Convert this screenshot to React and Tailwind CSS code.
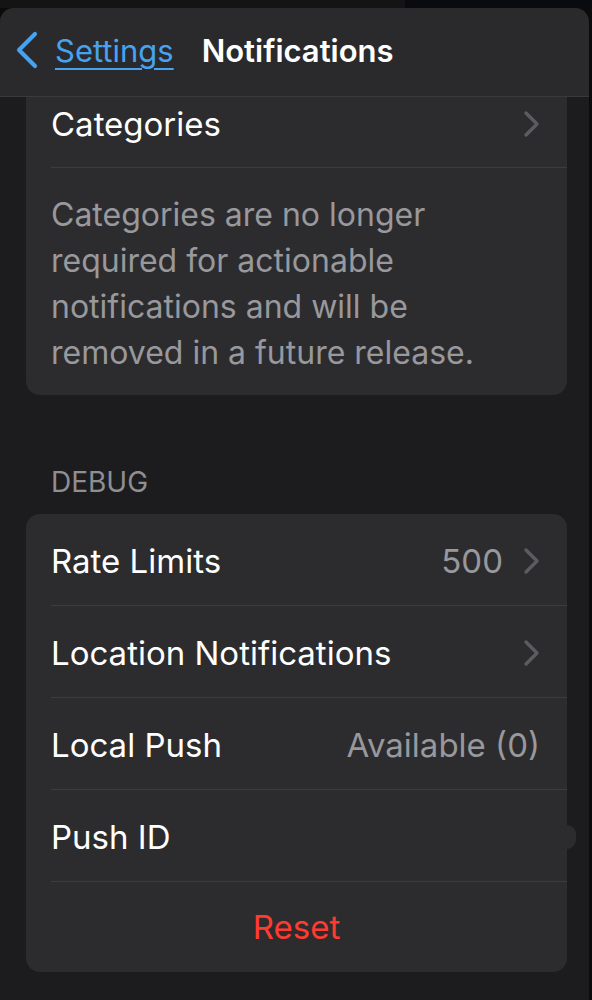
function Chevron() {
  return (
    <svg width="17" height="28" viewBox="0 0 17 28" fill="none" className="shrink-0">
      <path d="M3 3l11 11L3 25" stroke="#5c5c60" strokeWidth="3.4" strokeLinecap="round" strokeLinejoin="round" />
    </svg>
  )
}

function Row({ label, value, chevron, last }) {
  return (
    <div className="pl-[25px]">
      <div className={`h-[92px] flex items-center pt-[3px] pr-[27px] ${last ? '' : 'border-b border-[#3c3c3f]'}`}>
        <span className="text-white">{label}</span>
        <div className="ml-auto flex items-center gap-[20px]">
          {value && <span className="text-[#98989d]">{value}</span>}
          {chevron && <Chevron />}
        </div>
      </div>
    </div>
  )
}

export default function App() {
  return (
    <div
      className="w-[592px] h-[1000px] bg-[#0b0b0c] overflow-hidden flex flex-col text-[33px] leading-none"
      style={{ fontFamily: 'Inter, "Noto Sans", sans-serif' }}
    >
      {/* Status strip */}
      <div className="h-[8px] flex shrink-0">
        <div className="w-[405px] bg-[#141414]" />
        <div className="flex-1 bg-[#090b0e]" />
      </div>

      <div className="w-[589px] flex-1 bg-[#1c1c1e] rounded-t-[14px] overflow-hidden flex flex-col">
        {/* Nav bar */}
        <div className="h-[89px] shrink-0 bg-[#2a2a2c] border-b border-[#3a3a3c] flex items-center pl-[15px] pb-[4px]">
          <svg width="24" height="38" viewBox="0 0 24 38" fill="none">
            <path d="M20 3L4 19l16 16" stroke="#47a2ef" strokeWidth="4.2" strokeLinecap="round" strokeLinejoin="round" />
          </svg>
          <span className="ml-[16px] text-[31px] text-[#47a2ef] underline underline-offset-[6px] decoration-[2px]">Settings</span>
          <span className="ml-[28px] text-[31px] font-semibold text-white">Notifications</span>
        </div>

        <div className="pl-[26px] pr-[22px] flex flex-col">
          {/* Categories card (scrolled under the bar) */}
          <div className="bg-[#2c2c2e] rounded-b-[14px]">
            <div className="pl-[25px]">
              <div className="h-[71px] flex items-center pr-[27px] pb-[16px] border-b border-[#3c3c3f]">
                <span className="text-white">Categories</span>
                <div className="ml-auto"><Chevron /></div>
              </div>
            </div>
            <p className="px-[25px] pt-[24px] pb-[19px] text-[32px] leading-[46px] text-[#98989d]">
              Categories are no longer required for actionable notifications and will be removed in a future release.
            </p>
          </div>

          <div className="pl-[25px] pt-[73px] pb-[18px] text-[28px] text-[#8e8e93]">DEBUG</div>

          {/* Debug card */}
          <div className="bg-[#2c2c2e] rounded-[14px] relative">
            <Row label="Rate Limits" value="500" chevron />
            <Row label="Location Notifications" chevron />
            <Row label="Local Push" value="Available (0)" />
            <Row label="Push ID" />
            <div className="h-[90px] flex items-center justify-center text-[#ff3b30]">Reset</div>
            <div className="absolute right-[-9px] top-[311px] w-[18px] h-[24px] rounded-full bg-[#2c2c2e]" />
          </div>
        </div>
      </div>
    </div>
  )
}
